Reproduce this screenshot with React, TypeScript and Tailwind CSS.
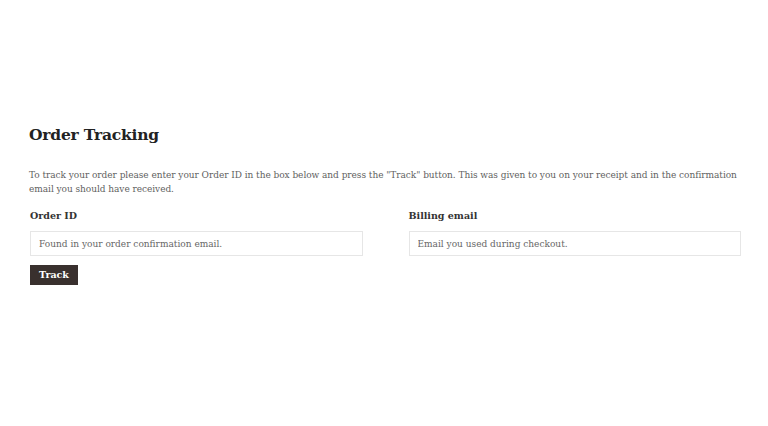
export default function App() {
  return (
    <div className="min-h-[426px] w-[768px] bg-white font-['DejaVu_Serif',serif] text-[#555]">
      <div className="pt-[124px] pl-[29px] pr-[27px]">
        <h1 className="text-[15.5px] font-bold leading-[22px] text-[#222] tracking-[-0.2px]">Order Tracking</h1>
        <p className="mt-[22px] text-[9px] leading-[14px] text-[#5f5f5f] tracking-[-0.05px]">
          To track your order please enter your Order ID in the box below and press the "Track" button. This was given to you on your receipt and in the confirmation email you should have received.
        </p>
        <div className="mt-[14px] grid grid-cols-2 gap-[46px] pl-[1px]">
          <div className="flex flex-col">
            <label className="text-[9.5px] font-bold leading-[12px] text-[#333]">Order ID</label>
            <input
              readOnly
              placeholder="Found in your order confirmation email."
              className="mt-[9px] h-[25px] border border-[#e6e6e6] px-[8px] text-[9px] placeholder:text-[#666] outline-none"
            />
          </div>
          <div className="flex flex-col">
            <label className="text-[9.5px] font-bold leading-[12px] text-[#333]">Billing email</label>
            <input
              readOnly
              placeholder="Email you used during checkout."
              className="mt-[9px] h-[25px] border border-[#e6e6e6] px-[8px] text-[9px] placeholder:text-[#666] outline-none"
            />
          </div>
        </div>
        <button className="mt-[9px] ml-[1px] h-[20px] w-[48px] bg-[#39302e] text-[9.5px] font-bold text-white">Track</button>
      </div>
    </div>
  );
}
